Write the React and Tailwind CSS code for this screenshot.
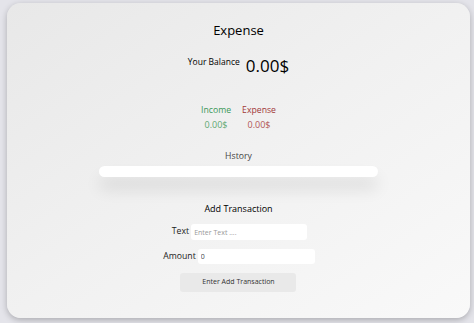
import React, { useState } from "react";

export default function App() {
  const [text, setText] = useState("");
  const [amount, setAmount] = useState(0);

  return (
    <div className="min-h-screen bg-[#e4e4ea] pt-[3px] pl-[7px] pr-[4px] pb-[5px] font-['Open_Sans',_'Noto_Sans',_sans-serif]">
      <div className="h-[315px] rounded-[14px] bg-linear-to-br from-[#e8e8e8] via-[#f1f1f1] to-[#f9f9f9] shadow-[0_2px_6px_rgba(0,0,0,0.25)] flex flex-col items-center pt-[17px]">
        <h1 className="text-[13px] leading-[20px] text-black">Expense</h1>

        <div className="flex items-start gap-[6px] mt-[14px]">
          <span className="text-[8.5px] leading-[12px] mt-[2px] text-black">Your Balance</span>
          <span className="text-[17px] leading-[24px] text-black">0.00$</span>
        </div>

        {/* income / expense */}
        <div className="flex gap-[11px] mt-[26px] text-center">
          <div className="flex flex-col items-center">
            <span className="text-[8.7px] leading-[12px] text-[#3b9858]">Income</span>
            <span className="text-[9px] leading-[12px] mt-[3px] text-[#5ea872]">0.00$</span>
          </div>
          <div className="flex flex-col items-center">
            <span className="text-[8.7px] leading-[12px] text-[#a13838]">Expense</span>
            <span className="text-[9px] leading-[12px] mt-[3px] text-[#b25656]">0.00$</span>
          </div>
        </div>

        <h3 className="text-[8.7px] leading-[12px] mt-[19px] text-[#444]">Hstory</h3>
        <ul className="w-[279px] h-[11px] mt-[4px] rounded-full bg-white shadow-[0_12px_16px_rgba(0,0,0,0.1)]"></ul>

        <h3 className="text-[9px] leading-[14px] mt-[25px] text-black">Add Transaction</h3>

        <form className="flex flex-col items-center mt-[8px]" onSubmit={(e) => e.preventDefault()}>
          <div className="flex items-center gap-[2px] pl-[2px]">
            <label className="text-[8.7px] text-[#222]">Text</label>
            <input
              type="text"
              value={text}
              onChange={(e) => setText(e.target.value)}
              placeholder="Enter Text ...."
              className="w-[116px] h-[16px] rounded-[3px] bg-white px-[3px] text-[7px] outline-none placeholder-[#999]"
            />
          </div>
          <div className="flex items-center gap-[2px] mt-[9px] pl-[1px]">
            <label className="text-[8.7px] text-[#222]">Amount</label>
            <input
              type="number"
              value={amount}
              onChange={(e) => setAmount(e.target.value)}
              className="w-[117px] h-[15px] rounded-[3px] bg-white px-[3px] text-[7px] text-[#444] outline-none"
            />
          </div>
          <button className="w-[116px] h-[19px] mt-[9px] rounded-[3px] bg-[#e9e9e9] text-[7px] text-[#333]">
            Enter Add Transaction
          </button>
        </form>
      </div>
    </div>
  );
}
